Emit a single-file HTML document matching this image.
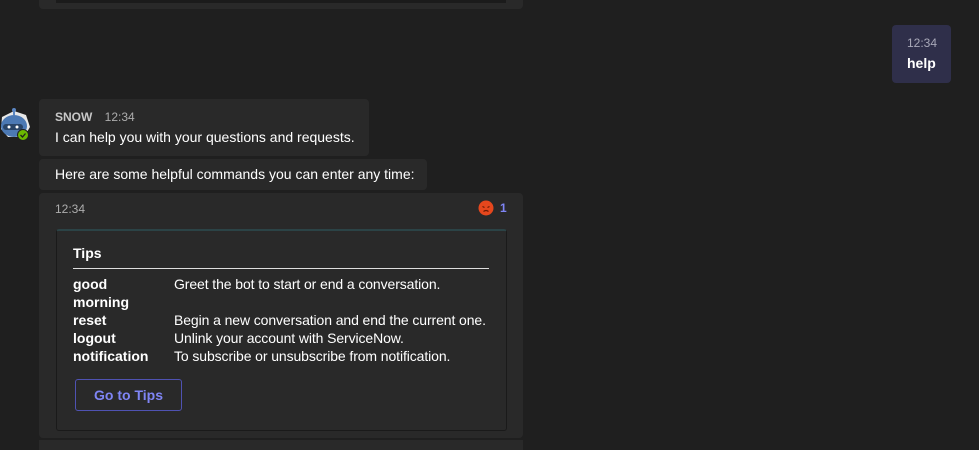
<!DOCTYPE html>
<html><head><style>
body{margin:0;width:979px;height:443px;background:#1f1f1f;overflow:hidden;position:relative;font-family:"Segoe UI","Liberation Sans",sans-serif;color:#fff;font-size:14px}
.a{position:absolute}
.b{background:#292929;border-radius:4px}
</style></head><body>
<div class="a b" style="left:39px;top:-4px;width:484px;height:13px"></div>
<div class="a" style="left:56px;top:0;width:450px;height:3px;background:#1b1b1b"></div>
<div class="a" style="left:892px;top:25px;width:59px;height:58px;background:#2f2f4a;border-radius:4px"></div>
<div class="a" style="left:907px;top:36px;font-size:12px;color:#a8a8b8">12:34</div>
<div class="a" style="left:907px;top:55px;font-size:14px;font-weight:600">help</div>

<svg class="a" style="left:0;top:107px" width="32" height="36" viewBox="0 0 32 36">
<polygon points="14,4 26,8 30,20 24,30 8,30 1,22 2,10" fill="#e8e8e8"/>
<circle cx="14" cy="3" r="2" fill="#5b86c2"/><rect x="13" y="4" width="2" height="4" fill="#5b86c2"/>
<ellipse cx="14" cy="19" rx="13" ry="11" fill="#4c79b4"/>
<rect x="3" y="17" width="20" height="6" rx="3" fill="#2a4568"/>
<circle cx="9" cy="20" r="1.5" fill="#fff"/><circle cx="17" cy="20" r="1.5" fill="#fff"/>
<circle cx="23" cy="28" r="6" fill="#1f1f1f"/><circle cx="23" cy="28" r="5" fill="#6bb700"/>
<path d="M20.5 28l2 2 3-3.5" stroke="#1f1f1f" stroke-width="1.3" fill="none"/>
</svg>

<div class="a b" style="left:39px;top:99px;width:330px;height:57px"></div>
<div class="a" style="left:55px;top:110px;font-size:12px;font-weight:bold;color:#c8c8c8">SNOW <span style="font-weight:normal;color:#adadad;margin-left:9px">12:34</span></div>
<div class="a" style="left:55px;top:129px">I can help you with your questions and requests.</div>

<div class="a b" style="left:39px;top:159px;width:388px;height:31px"></div>
<div class="a" style="left:55px;top:166px">Here are some helpful commands you can enter any time:</div>

<div class="a b" style="left:39px;top:193px;width:484px;height:245px"></div>
<div class="a" style="left:55px;top:202px;font-size:12px;color:#adadad">12:34</div>
<svg class="a" style="left:478px;top:200px" width="16" height="16" viewBox="0 0 16 16">
<circle cx="8" cy="8" r="7.5" fill="#e5471d"/>
<path d="M4.5 6.5l2 1M11.5 6.5l-2 1M5.5 11.5q2.5-2 5 0" stroke="#6a1a05" stroke-width="1.2" fill="none"/>
</svg>
<div class="a" style="left:500px;top:201px;font-size:12px;font-weight:bold;color:#7f85f5">1</div>
<div class="a" style="left:56px;top:229px;width:449px;height:199px;background:#292929;border:1px solid #1a1a1a;border-top:2px solid #2b4346;border-radius:3px"></div>
<div class="a" style="left:73px;top:245px;font-weight:bold">Tips</div>
<div class="a" style="left:73px;top:268px;width:416px;height:1px;background:#ddd"></div>
<div class="a" style="left:73px;top:275px;font-weight:bold;line-height:18px">good<br>morning<br>reset<br>logout<br>notification</div>
<div class="a" style="left:174px;top:275px;line-height:18px;letter-spacing:-0.1px">Greet the bot to start or end a conversation.<br><br>Begin a new conversation and end the current one.<br>Unlink your account with ServiceNow.<br>To subscribe or unsubscribe from notification.</div>
<div class="a" style="left:75px;top:379px;width:105px;height:30px;border:1px solid #4f52b2;border-radius:3px;color:#7f85f5;text-align:center;line-height:30px;font-weight:600">Go to Tips</div>
<div class="a" style="left:39px;top:440px;width:484px;height:10px;background:#292929"></div>
</body></html>
